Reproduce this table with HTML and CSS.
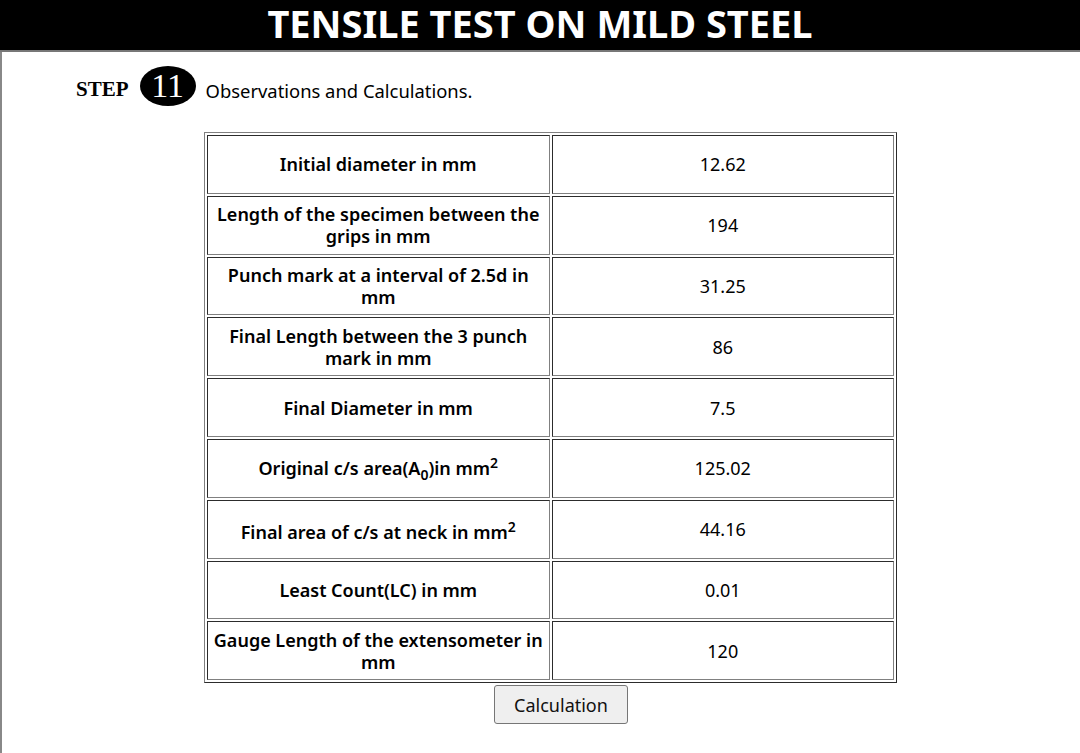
FILE: index.html
```html
<!DOCTYPE html>
<html>
<head>
<meta charset="utf-8">
<link rel="stylesheet" href="styles.css">
</head>
<body>
<div class="page">
  <header class="banner"><h1 class="banner-title">TENSILE TEST ON MILD STEEL</h1></header>
  <div class="content">
    <div class="step">
      <span class="step-label">STEP</span>
      <span class="step-num">11</span>
      <span class="step-text">Observations and Calculations.</span>
    </div>
    <table class="obs" border="1">
      <tr><th>Initial diameter in mm</th><td>12.62</td></tr>
      <tr><th>Length of the specimen between the grips in mm</th><td>194</td></tr>
      <tr><th>Punch mark at a interval of 2.5d in mm</th><td>31.25</td></tr>
      <tr><th>Final Length between the 3 punch mark in mm</th><td>86</td></tr>
      <tr><th>Final Diameter in mm</th><td>7.5</td></tr>
      <tr><th>Original c/s area(A<sub>0</sub>)in mm<sup>2</sup></th><td>125.02</td></tr>
      <tr><th>Final area of c/s at neck in mm<sup>2</sup></th><td>44.16</td></tr>
      <tr><th>Least Count(LC) in mm</th><td>0.01</td></tr>
      <tr><th>Gauge Length of the extensometer in mm</th><td>120</td></tr>
    </table>
    <div class="actions"><button class="calc">Calculation</button></div>
  </div>
</div>
</body>
</html>
```
FILE: styles.css
```css
html, body {
  margin: 0;
  padding: 0;
  background: #fff;
}
.page {
  width: 1080px;
  height: 753px;
  overflow: hidden;
  font-family: "Noto Sans", sans-serif;
}
.banner {
  background: #000;
  height: 50px;
  border-bottom: 2px solid #777;
  display: flex;
  align-items: center;
  justify-content: center;
}
.banner-title {
  margin: -5px 0 0 0;
  color: #fff;
  font-size: 38px;
  font-weight: 700;
  line-height: 38px;
}
.content {
  border-left: 2px solid #888;
  height: 701px;
}
.step {
  display: flex;
  align-items: center;
  padding: 13px 0 0 74px;
  height: 42px;
}
.step-label {
  font-family: "Liberation Serif", serif;
  font-weight: 700;
  font-size: 21px;
  margin-right: 11px;
  margin-top: 6px;
}
.step-num {
  display: inline-flex;
  align-items: center;
  justify-content: center;
  width: 56px;
  height: 40px;
  border-radius: 50%;
  background: #000;
  color: #fff;
  font-family: "Liberation Serif", serif;
  font-size: 34px;
  margin-right: 10px;
}
.step-text {
  font-size: 18.4px;
  margin-top: 8px;
}
.obs {
  margin: 25px 0 0 202px;
  width: 693px;
  table-layout: fixed;
  border-spacing: 2px;
}
.obs th, .obs td {
  width: 50%;
  height: 54.8px;
  padding: 1px;
  text-align: center;
  font-size: 18px;
  line-height: 22px;
}
.obs th { font-weight: 600; }
.obs td { font-weight: 400; }
.obs sub, .obs sup { font-size: 14px; }
.actions {
  margin: 2px 0 0 492px;
}
.calc {
  width: 134px;
  height: 39px;
  font-family: "Noto Sans", sans-serif;
  font-size: 18px;
  background: #efefef;
  border: 1px solid #767676;
  border-radius: 3px;
  color: #111;
}
```
